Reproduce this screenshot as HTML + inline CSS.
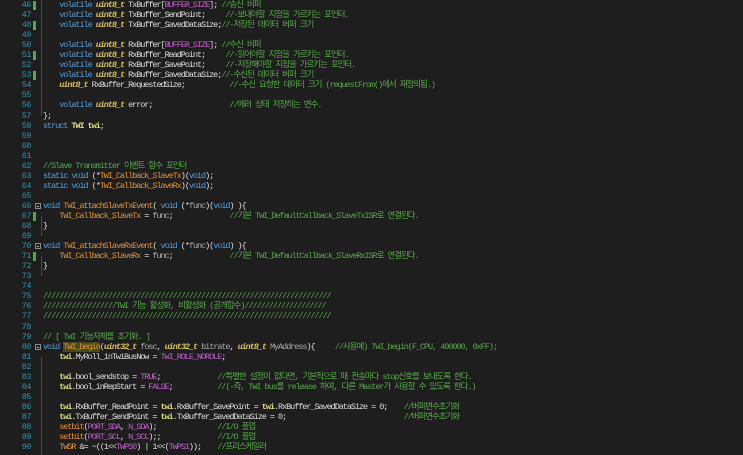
<!DOCTYPE html>
<html><head><meta charset="utf-8">
<style>
html,body{margin:0;padding:0;background:#1e1e1e;width:743px;height:455px;overflow:hidden}
pre{margin:0;font-family:"Liberation Mono","Noto Sans CJK KR",monospace;font-size:8.5px;line-height:10.05px;letter-spacing:-1.05px;position:absolute;top:0;white-space:pre}
#num{left:0;width:31px;text-align:right;color:#2b91af;letter-spacing:-0.5px}
#code{left:43px;color:#dcdcdc}
.k{color:#569cd6}.t{color:#d8c060;font-style:italic;font-weight:bold}.c{color:#57a64a}.m{color:#bd63c5}.o{color:#e0913a}.y{color:#dcdc8b;font-weight:bold}.p{color:#a8a8a8}
.g{position:absolute;left:33px;width:3px;height:9px;background:#57a64a}
.v{position:absolute;left:41px;width:1px;background:#4a4a4a}
.f{position:absolute;left:35px;width:6px;height:6px;border:1px solid #8a8a8a;box-sizing:border-box}
.f::after{content:"";position:absolute;left:1px;top:2px;width:2px;height:1px;background:#bbb}
.hl{background:#4b4a1c}
</style></head><body>
<div class="v" style="top:0;height:116px"></div>
<div class="v" style="top:216px;height:20px"></div>
<div class="v" style="top:256px;height:20px"></div>
<div class="v" style="top:357px;height:98px"></div>
<div class="g" style="top:1px"></div><div class="g" style="top:21px"></div><div class="g" style="top:51px"></div><div class="g" style="top:71px"></div><div class="g" style="top:212px"></div><div class="g" style="top:252px"></div>
<div class="f" style="top:203px"></div><div class="f" style="top:243px"></div><div class="f" style="top:344px"></div>
<pre id="num">46
47
48
49
50
51
52
53
54
55
56
57
58
59
60
61
62
63
64
65
66
67
68
69
70
71
72
73
74
75
76
77
78
79
80
81
82
83
84
85
86
87
88
89
90</pre>
<pre id="code">    <span class="k">volatile</span> <span class="t">uint8_t</span> TxBuffer[<span class="m">BUFFER_SIZE</span>]; <span class="c">//송신 버퍼</span>
    <span class="k">volatile</span> <span class="t">uint8_t</span> TxBuffer_SendPoint;     <span class="c">//-보내야할 지점을 가르키는 포인터.</span>
    <span class="k">volatile</span> <span class="t">uint8_t</span> TxBuffer_SavedDataSize;<span class="c">//-저장된 데이터 버퍼 크기</span>

    <span class="k">volatile</span> <span class="t">uint8_t</span> RxBuffer[<span class="m">BUFFER_SIZE</span>]; <span class="c">//수신 버퍼</span>
    <span class="k">volatile</span> <span class="t">uint8_t</span> RxBuffer_ReadPoint;     <span class="c">//-읽어야할 지점을 가르키는 포인터.</span>
    <span class="k">volatile</span> <span class="t">uint8_t</span> RxBuffer_SavePoint;     <span class="c">//-저장해야할 지점을 가르키는 포인터.</span>
    <span class="k">volatile</span> <span class="t">uint8_t</span> RxBuffer_SavedDataSize;<span class="c">//-수신된 데이터 버퍼 크기</span>
    <span class="t">uint8_t</span> RxBuffer_RequestedSize;           <span class="c">//-수신 요청한 데이터 크기 (requestFrom()에서 재정의됨.)</span>

    <span class="k">volatile</span> <span class="t">uint8_t</span> error;                   <span class="c">//에러 상태 저장하는 변수.</span>
};
<span class="k">struct</span> <span class="y">TWI</span> <span class="y">twi</span>;



<span class="c">//Slave Transmitter 이벤트 함수 포인터</span>
<span class="k">static</span> <span class="k">void</span> (*<span class="o">TWI_Callback_SlaveTx</span>)(<span class="k">void</span>);
<span class="k">static</span> <span class="k">void</span> (*<span class="o">TWI_Callback_SlaveRx</span>)(<span class="k">void</span>);

<span class="k">void</span> <span class="o">TWI_attachSlaveTxEvent</span>( <span class="k">void</span> (*<span class="p">func</span>)(<span class="k">void</span>) ){
    <span class="o">TWI_Callback_SlaveTx</span> = <span class="p">func</span>;              <span class="c">//기본 TWI_DefaultCallback_SlaveTxISR로 연결된다.</span>
}

<span class="k">void</span> <span class="o">TWI_attachSlaveRxEvent</span>( <span class="k">void</span> (*<span class="p">func</span>)(<span class="k">void</span>) ){
    <span class="o">TWI_Callback_SlaveRx</span> = <span class="p">func</span>;              <span class="c">//기본 TWI_DefaultCallback_SlaveRxISR로 연결된다.</span>
}


<span class="c">///////////////////////////////////////////////////////////////////////</span>
<span class="c">//////////////////TWI 기능 활성화, 비활성화 (공개함수)////////////////////</span>
<span class="c">///////////////////////////////////////////////////////////////////////</span>

<span class="c">// [ TWI 기능자체를 초기화. ]</span>
<span class="k">void</span> <span class="o hl">TWI_begin</span>(<span class="t">uint32_t</span> <span class="p">fosc</span>, <span class="t">uint32_t</span> <span class="p">bitrate</span>, <span class="t">uint8_t</span> <span class="p">MyAddress</span>){     <span class="c">//사용예) TWI_begin(F_CPU, 400000, 0xFF);</span>
    <span class="y">twi</span>.MyRoll_inTwiBusNow = <span class="m">TWI_ROLE_NOROLE</span>;

    <span class="y">twi</span>.bool_sendstop = <span class="m">TRUE</span>;              <span class="c">//특별한 설정이 없다면, 기본적으로 매 전송마다 stop신호를 보내도록 한다.</span>
    <span class="y">twi</span>.bool_inRepStart = <span class="m">FALSE</span>;           <span class="c">//(-즉, TWI bus를 release 하여, 다른 Master가 사용할 수 있도록 한다.)</span>

    <span class="y">twi</span>.RxBuffer_ReadPoint = <span class="y">twi</span>.RxBuffer_SavePoint = <span class="y">twi</span>.RxBuffer_SavedDataSize = 0;    <span class="c">//버퍼변수초기화</span>
    <span class="y">twi</span>.TxBuffer_SendPoint = <span class="y">twi</span>.TxBuffer_SavedDataSize = 0;                             <span class="c">//버퍼변수초기화</span>
    <span class="o">setbit</span>(<span class="m">PORT_SDA</span>, <span class="m">N_SDA</span>);               <span class="c">//I/O 풀업</span>
    <span class="o">setbit</span>(<span class="m">PORT_SCL</span>, <span class="m">N_SCL</span>);;              <span class="c">//I/O 풀업</span>
    <span class="o">TWSR</span> &amp;= ~((1&lt;&lt;<span class="m">TWPS0</span>) | 1&lt;&lt;(<span class="m">TWPS1</span>));    <span class="c">//프리스케일러</span></pre>
</body></html>
